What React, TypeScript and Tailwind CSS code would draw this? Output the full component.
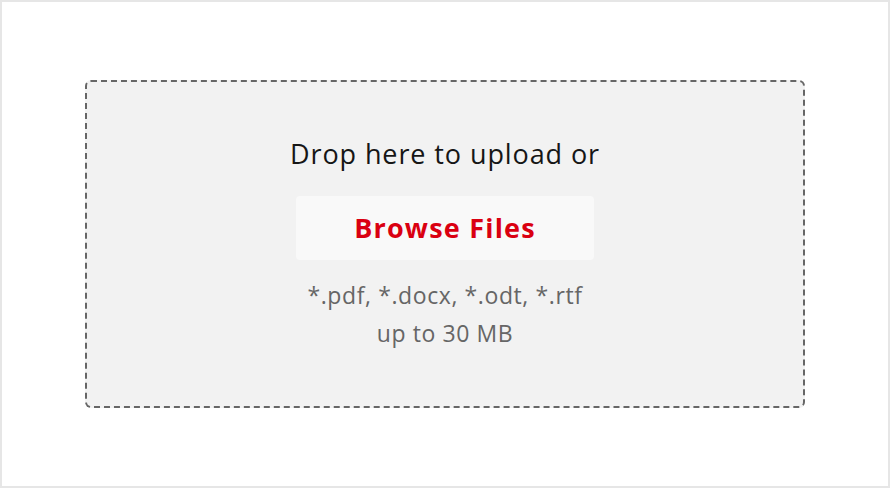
import React from "react";

export default function App() {
  return (
    <div
      className="w-[890px] h-[488px] bg-white border-2 border-[#e6e6e6] flex items-center justify-center"
      style={{ fontFamily: '"Open Sans", "Noto Sans", sans-serif' }}
    >
      <div className="w-[720px] h-[328px] bg-[#f2f2f2] border-2 border-dashed border-[#666666] rounded-[6px] flex flex-col items-center pt-[54px]">
        <div className="text-[27px] leading-[36px] tracking-[0.9px] text-[#161616]">Drop here to upload or</div>
        <button className="mt-[24px] w-[298px] h-[64px] bg-[#f9f9f9] rounded-[4px] text-[27px] font-bold tracking-[1.2px] text-[#da0011] flex items-center justify-center">
          Browse Files
        </button>
        <div className="mt-[16px] text-[23px] leading-[38px] tracking-[0.6px] text-[#666666] text-center">
          <div>*.pdf, *.docx, *.odt, *.rtf</div>
          <div>up to 30 MB</div>
        </div>
      </div>
    </div>
  );
}
